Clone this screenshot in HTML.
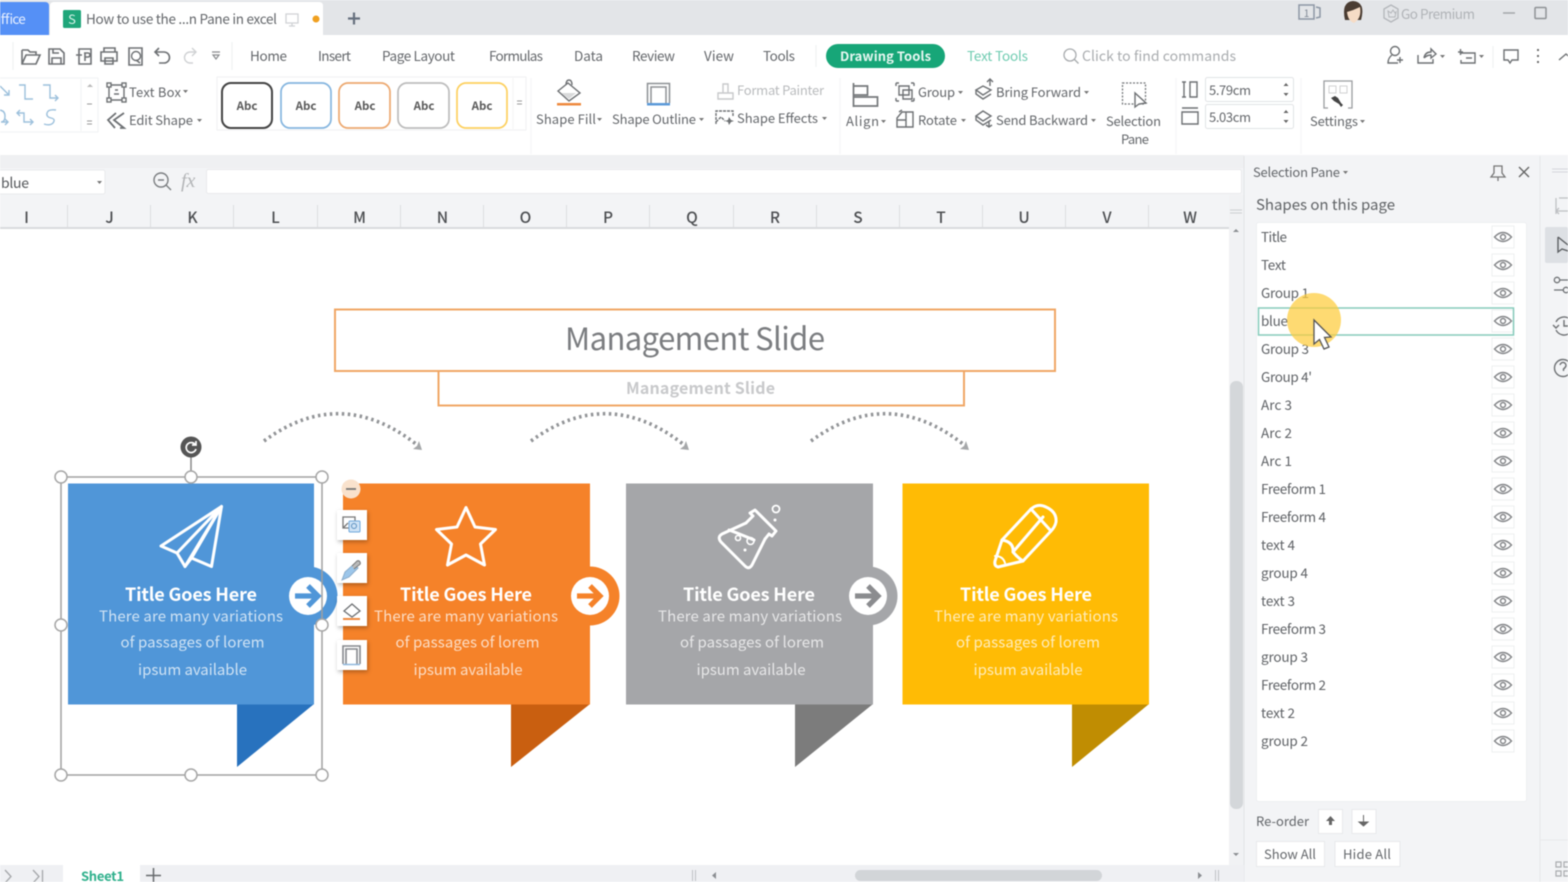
<!DOCTYPE html>
<html><head><meta charset="utf-8"><title>How to use the Selection Pane in excel</title>
<style>
html,body{margin:0;padding:0;width:1568px;height:882px;overflow:hidden;background:#fff}
svg{position:absolute;left:0;top:0;filter:blur(.55px)}
text{font-family:"Noto Sans CJK SC","Liberation Sans",sans-serif;font-size:13.5px;fill:#5f6266}
.tab{font-size:13.5px;fill:#64676b}
.rb{font-size:13px;fill:#64676b}
.col{font-size:15.5px;fill:#4d4f52;text-anchor:middle;font-weight:500}
.li{font-size:13.5px;fill:#5f6266}
.abc{font-size:11.5px;font-weight:700;fill:#5a5a5a;text-anchor:middle}
.tt{font-size:18px;font-weight:700;fill:#fff;text-anchor:middle}
.bd{font-size:15px;fill:#fff;fill-opacity:.72;text-anchor:middle}
.ic{fill:none;stroke:#6e7174;stroke-width:1.4}
.wh{fill:none;stroke:#fff;stroke-width:3;stroke-linejoin:round;stroke-linecap:round}
</style></head><body>
<svg width="1568" height="882" viewBox="0 0 1568 882" xmlns="http://www.w3.org/2000/svg">
<defs>
<path id="c" d="M0 0h5l-2.500 3z" fill="#777"/>
<g id="eye"><rect x="-11" y="-11" width="22" height="22" fill="#fff" stroke="#eeeff0"/><path d="M-8.500 0Q0-9 8.500 0Q0 9-8.500 0Z" fill="none" stroke="#85878a" stroke-width="1.400"/><circle r="2.500" fill="none" stroke="#85878a" stroke-width="1.400"/></g>
<g id="h"><circle r="6" fill="#fff" stroke="#a5a5a5" stroke-width="1.500"/></g>
<g id="fb"><rect x="0" y="0" width="30" height="30" fill="#fff" style="filter:drop-shadow(1px 2px 2px rgba(0,0,0,.28))"/></g>
</defs>

<!-- title bar -->
<rect width="1568" height="35" fill="#e3e5e8"/>
<path d="M0 2H45Q49 2 49 6V35H0Z" fill="#5590f6"/>
<text x="0" y="24" fill="#fff" style="fill:#e8f0ff;font-size:13.500px" textLength="25">ffice</text>
<path d="M50 35V6Q50 2 54 2H319Q323 2 323 6V35Z" fill="#fff"/>
<rect x="63" y="10" width="18" height="18" rx="1.500" fill="#1fa67a"/>
<text x="72" y="24" style="fill:#d8f3ea;font-size:13px;text-anchor:middle">S</text>
<text x="86" y="24" class="tab" textLength="191">How to use the ...n Pane in excel</text>
<path d="M286 14h12v9h-12zM292 23v3M289 26h6" fill="none" stroke="#d0d2d5" stroke-width="1.300"/>
<circle cx="316" cy="19" r="3.500" fill="#f0a020"/>
<path d="M348 18.500h12M354 12.500v12" stroke="#66707e" stroke-width="2.200"/>
<path d="M1299 5h15v14h-15zM1316 7l4 1v9l-4 1" fill="none" stroke="#8d97a5" stroke-width="1.500"/>
<text x="1306.500" y="17" style="font-size:10px;text-anchor:middle;fill:#7f8894">1</text>
<path d="M1345 20Q1341 2 1353 1Q1366 2 1361 20Z" fill="#4a3c32"/>
<path d="M1347 12Q1354 10 1360 7Q1362 18 1354 23Q1348 21 1347 12Z" fill="#f6dcc6"/>
<path d="M1384 9l7-4 7 4v9l-7 4-7-4z" fill="none" stroke="#b3b6ba" stroke-width="1.300"/>
<path d="M1388 11l3 2 2-3 2 3 1-1-1 5h-6z" fill="none" stroke="#b3b6ba"/>
<text x="1401" y="19" style="font-size:13.500px;fill:#b0b3b7" textLength="74">Go Premium</text>
<path d="M1503 13h12" stroke="#a3a6aa" stroke-width="1.500"/>
<rect x="1535" y="7.500" width="11" height="11" rx="1" fill="none" stroke="#8f9296" stroke-width="1.500"/>

<!-- ribbon -->
<rect y="35" width="1568" height="120" fill="#fff"/>
<rect y="155" width="1568" height="13" fill="#eff0f2"/>
<rect y="168" width="1568" height="27" fill="#f3f4f6"/>
<!-- quick access -->
<g class="ic" style="stroke-width:1.600">
<path d="M22 50v14h14l4-9H26l-4 9M22 50h6l2 2h6v3"/>
<path d="M49 49h11l4 4v11H49zM52 64v-6h9v6M53 49v4h6"/>
<path d="M79 49h12v15H79zM76 55h6M79 52v6M84 53h4a2 2 0 010 4h-3M85 53v8"/>
<path d="M104 52v-4h11v4M101 52h16v9h-16zM105 58h8v6h-8z"/>
<path d="M129 48h13v17h-13zM136 60l4 3"/><circle cx="136" cy="56" r="4.500" class="ic"/>
<path d="M155 52h9a5.500 5.500 0 010 11h-5M159 48l-4 4 4 4"/>
</g>
<path d="M196 52h-6a5.500 5.500 0 000 11h3M192 48l4 4-4 4" fill="none" stroke="#d0d2d4" stroke-width="1.400"/>
<path d="M212 52h8M213 55h6l-3 4z" fill="none" stroke="#8a8c8f" stroke-width="1.200"/>
<path d="M13 42v28M232 42v28" stroke="#eeeff0"/>
<text x="250" y="61" class="tab" textLength="37">Home</text>
<text x="318" y="61" class="tab" textLength="33">Insert</text>
<text x="382" y="61" class="tab" textLength="73">Page Layout</text>
<text x="489" y="61" class="tab" textLength="54">Formulas</text>
<text x="574" y="61" class="tab" textLength="29">Data</text>
<text x="632" y="61" class="tab" textLength="43">Review</text>
<text x="704" y="61" class="tab" textLength="30">View</text>
<text x="763" y="61" class="tab" textLength="32">Tools</text>
<path d="M816 45v22" stroke="#eeeff0"/>
<rect x="826" y="44" width="119" height="24" rx="12" fill="#17a678"/>
<text x="840" y="61" style="fill:#e6f7f1;font-weight:700;font-size:13px" textLength="91">Drawing Tools</text>
<text x="967" y="61" style="fill:#6ecbb0;font-size:13.500px" textLength="61">Text Tools</text>
<circle cx="1070" cy="55" r="6" fill="none" stroke="#a8abae" stroke-width="1.300"/><path d="M1074.500 59.500l4 4" stroke="#a8abae" stroke-width="1.300"/>
<text x="1082" y="61" style="fill:#a9acaf;font-size:14px" textLength="154">Click to find commands</text>
<g class="ic">
<circle cx="1395" cy="51" r="4.500"/><path d="M1392 55q-4 3-4 8h10M1400 57v6M1397 60h6"/>
<path d="M1418 55v8h15v-4M1424 58q1-6 7-6v-3l5 5-5 4v-3q-4 0-7 3"/>
<path d="M1461 53h14v10h-14v-3M1458 52h5M1460.500 49v6M1466 58h6"/>
<path d="M1504 50h14v10h-6l-2 3-2-3h-4z"/>
<path d="M1559 60l7-6 7 6"/>
</g>
<use href="#c" x="1440" y="55"/><use href="#c" x="1479" y="55"/>
<circle cx="1538" cy="50" r="1.100" fill="#666"/><circle cx="1538" cy="56" r="1.100" fill="#666"/><circle cx="1538" cy="62" r="1.100" fill="#666"/>
<path d="M1493 46v22" stroke="#eeeff0"/>

<!-- connector gallery -->
<rect x="-2" y="78" width="100" height="54" fill="#fff" stroke="#f1f2f3"/>
<path d="M81 79v52" stroke="#f1f2f3"/>
<g fill="none" stroke="#9cc0dc" stroke-width="1.400">
<path d="M0 86l9 9M9 90v5H4"/>
<path d="M19 85h6v14h8"/>
<path d="M43 85h7v13h8M55 95l3 3-3 3"/>
<path d="M-2 110q7 0 7 6t-4 6H8M5 119l3 3-3 3"/>
<path d="M20 110l-3 3 3 3M17 113h7v9h9M30 119l3 3-3 3"/>
<path d="M56 110q-8-1-9 3t4 5 2 5q-3 3-9 1"/>
</g>
<path d="M87 87l3-3 3 3z" fill="#bbb"/><path d="M87 104h5" stroke="#999"/><path d="M87 121h5M87 124h5" stroke="#999"/>
<g class="ic">
<path d="M109 85h15v15h-15z"/><rect x="107" y="83" width="4" height="4" fill="#fff"/><rect x="122" y="83" width="4" height="4" fill="#fff"/><rect x="107" y="98" width="4" height="4" fill="#fff"/><rect x="122" y="98" width="4" height="4" fill="#fff"/>
<path d="M115 90h3M114 94h5"/>
<path d="M116 113l-8 7 7 8M124 113l-10 7 10 8h-4" stroke-width="1.800"/>
</g>
<text x="129" y="97" class="rb" textLength="52">Text Box</text><use href="#c" x="183" y="90"/>
<text x="129" y="125" class="rb" textLength="64">Edit Shape</text><use href="#c" x="197" y="119"/>

<!-- style gallery -->
<rect x="217" y="77" width="309" height="53" fill="#fff" stroke="#f0f1f2"/>
<path d="M513 78v51" stroke="#f3f3f4"/>
<rect x="222" y="83" width="50" height="45" rx="9" fill="#fff" stroke="#444" stroke-width="2"/>
<rect x="281" y="83" width="50" height="45" rx="9" fill="#fff" stroke="#84b5df" stroke-width="1.700"/>
<rect x="339" y="83" width="51" height="45" rx="9" fill="#fff" stroke="#eca86f" stroke-width="1.700"/>
<rect x="398" y="83" width="51" height="45" rx="9" fill="#fff" stroke="#bcbcbc" stroke-width="1.700"/>
<rect x="457" y="83" width="50" height="45" rx="9" fill="#fff" stroke="#fdd05e" stroke-width="1.700"/>
<text x="247" y="110" class="abc">Abc</text><text x="306" y="110" class="abc">Abc</text><text x="365" y="110" class="abc">Abc</text><text x="424" y="110" class="abc">Abc</text><text x="482" y="110" class="abc">Abc</text>
<path d="M517 101h5M517 104h5" stroke="#999"/>
<path d="M531 78v76M840 78v76M1176 78v76M1301 78v76" stroke="#f4f5f6"/>

<!-- fill/outline -->
<path d="M558 91l10-8 12 10-11 8zM566 85q0-5 3-5 3 0 3 5" fill="none" stroke="#6e7174" stroke-width="1.400"/>
<path d="M561 93h15l-7 6z" fill="#d9dadb"/>
<rect x="557" y="103" width="24" height="2.500" fill="#ee8a3f"/>
<text x="536" y="124" class="rb" textLength="60">Shape Fill</text><use href="#c" x="597" y="118"/>
<path d="M647.500 103V83.500H669.500V103M651 103V87H666V103" fill="none" stroke="#8d9094" stroke-width="1.500"/>
<rect x="647" y="103" width="23" height="2.500" fill="#5b9ad9"/>
<text x="612" y="124" class="rb" textLength="84">Shape Outline</text><use href="#c" x="699" y="118"/>
<path d="M718 99v-6h5v-9h5v9h5v6zM718 93h15" fill="none" stroke="#c8c9cb" stroke-width="1.400"/>
<text x="737" y="95" class="rb" style="fill:#b9bbbd" textLength="87">Format Painter</text>
<path d="M716 124v-13h17v6M716 122l5-5 4 4" fill="none" stroke="#6e7174" stroke-width="1.400" stroke-dasharray="3 1"/><path d="M729 117l2 3 3 1-3 1-2 3-1-3-3-1 3-1z" fill="#6e7174"/>
<text x="737" y="123" class="rb" textLength="81">Shape Effects</text><use href="#c" x="822" y="117"/>

<!-- arrange -->
<path d="M853.500 83v24M853.500 86h14v9h-14M853.500 97h24v9h-24" fill="none" stroke="#74777a" stroke-width="1.700"/>
<text x="846" y="126" class="rb" textLength="33">Align</text><use href="#c" x="881" y="120"/>
<g class="ic">
<path d="M899 86h10v9h-10zM903 90h9v9h-9z"/><path d="M896 83h3M896 83v3M914 83h-3M914 83v3M896 101v-3M896 101h3M914 101v-3M914 101h-3"/>
<path d="M897 127v-9l5-6h11v15zM897 120h9M906 112v15M899 112l3-2"/>
<path d="M976 90l7-4 8 4-8 5zM976 90v4l7 5 8-5M990 79v7M987 82l3-3 3 3"/>
<path d="M976 116l7-5 8 5-8 5zM976 116v4l7 5 8-5M989 122v5M986 125l3 2 3-2"/>
</g>
<text x="918" y="97" class="rb" textLength="37">Group</text><use href="#c" x="958" y="91"/>
<text x="918" y="125" class="rb" textLength="39">Rotate</text><use href="#c" x="961" y="119"/>
<text x="996" y="97" class="rb" textLength="85">Bring Forward</text><use href="#c" x="1084" y="91"/>
<text x="996" y="125" class="rb" textLength="92">Send Backward</text><use href="#c" x="1091" y="119"/>
<rect x="1122.500" y="83" width="23" height="21" fill="none" stroke="#74777a" stroke-width="1.300" stroke-dasharray="2 1.500"/>
<path d="M1135 93v14l4-3 7-1z" fill="#fff" stroke="#6e7174" stroke-width="1.400"/>
<text x="1106" y="126" class="rb" textLength="55">Selection</text>
<text x="1121" y="144" class="rb" textLength="28">Pane</text>

<!-- size -->
<g class="ic"><path d="M1182 82h4M1182 97h4M1184 82v15M1190 82h7v15h-7z"/><path d="M1182 108h16M1182 112h16v12h-16z"/></g>
<rect x="1205.500" y="77.500" width="88" height="24" rx="2" fill="#fff" stroke="#e1e3e5"/>
<rect x="1205.500" y="104.500" width="88" height="24" rx="2" fill="#fff" stroke="#e1e3e5"/>
<text x="1209" y="95" class="rb" textLength="42">5.79cm</text>
<text x="1209" y="122" class="rb" textLength="42">5.03cm</text>
<path d="M1283.500 86l2.500-3 2.500 3zM1283.500 93h5l-2.500 3zM1283.500 113l2.500-3 2.500 3zM1283.500 120h5l-2.500 3z" fill="#666"/>
<!-- settings -->
<path d="M1328 108h-4V81h28v27h-4" fill="none" stroke="#9a9c9f" stroke-width="1.300"/>
<path d="M1329 86h7v7h-7zM1340 86h7v7h-7z" fill="none" stroke="#d0d1d3"/>
<path d="M1331 98l3 3 5 3 2 3 2-2-2-2-3-5-3-2z" fill="#444"/>
<text x="1310" y="126" class="rb" textLength="48">Settings</text><use href="#c" x="1360" y="120"/>

<!-- formula bar -->
<rect x="-2" y="170" width="107" height="24" rx="2" fill="#fff" stroke="#e9eaec"/>
<text x="1" y="188" style="font-size:14px;fill:#55585b" textLength="28">blue</text>
<use href="#c" x="97" y="181"/>
<circle cx="161" cy="180" r="7" fill="none" stroke="#7b7e81" stroke-width="1.400"/><path d="M158 180h6M166 185l5 5" stroke="#7b7e81" stroke-width="1.400"/>
<text x="181" y="187" style="font-family:'Liberation Serif',serif;font-style:italic;font-size:20px;fill:#b3b5b7">fx</text>
<rect x="206.500" y="169.500" width="1035" height="24" rx="2" fill="#fff" stroke="#e9eaec"/>

<!-- column headers -->
<rect y="195" width="1229" height="34" fill="#f3f4f6"/>
<rect y="227" width="1229" height="2" fill="#d9dbde"/>
<path d="M67.500 205V227M150.500 205V227M233.500 205V227M317.500 205V227M400.500 205V227M483.500 205V227M566.500 205V227M649.500 205V227M733.500 205V227M816.500 205V227M899.500 205V227M982.500 205V227M1065.500 205V227M1148.500 205V227" stroke="#dcdee0"/>
<text x="26.500" y="223" class="col">I</text><text x="109.500" y="223" class="col">J</text><text x="192.500" y="223" class="col">K</text><text x="275.500" y="223" class="col">L</text><text x="359.500" y="223" class="col">M</text><text x="442.500" y="223" class="col">N</text><text x="525.500" y="223" class="col">O</text><text x="608" y="223" class="col">P</text><text x="692" y="223" class="col">Q</text><text x="775" y="223" class="col">R</text><text x="858" y="223" class="col">S</text><text x="941" y="223" class="col">T</text><text x="1024" y="223" class="col">U</text><text x="1107" y="223" class="col">V</text><text x="1190" y="223" class="col">W</text>

<!-- vertical scrollbar -->
<rect x="1229" y="195" width="15" height="670" fill="#f1f2f4"/>
<path d="M1230 210h12M1230 213h12" stroke="#ccced1"/>
<path d="M1233 232l3-3 3 3z" fill="#8b8e92"/>
<rect x="1230" y="381" width="13" height="428" rx="6" fill="#d4d7da"/>
<path d="M1233 853h6l-3 3z" fill="#8b8e92"/>

<!-- slide heading -->
<rect x="335" y="309.500" width="720" height="61.500" fill="#fff" stroke="#f0a766" stroke-width="2"/>
<path d="M438.500 372V405.500H964V372" fill="none" stroke="#f0a766" stroke-width="2"/>
<text x="695" y="350" style="font-size:31px;fill:#7b7d80;text-anchor:middle" textLength="260">Management Slide</text>
<text x="700.500" y="394" style="font-size:16px;font-weight:700;fill:#c8c9cb;text-anchor:middle" textLength="149">Management Slide</text>

<!-- arcs -->
<g fill="none" stroke="#929497" stroke-width="3.600" stroke-dasharray="2.500 3.500">
<path d="M264 441Q340 385 416 444"/>
<path d="M531 441Q607 385 683 444"/>
<path d="M811 441Q887 385 963 444"/>
</g>
<path d="M413 449l9 1-3-9-2 5zM680 449l9 1-3-9-2 5zM960 449l9 1-3-9-2 5z" fill="#a5a7a9"/>

<!-- cards -->
<path d="M237 704H314L237 767Z" fill="#2872be"/>
<path d="M511 704H590L511 767Z" fill="#c95f10"/>
<path d="M795 704H873L795 767Z" fill="#7c7c7c"/>
<path d="M1072 704H1149L1072 767Z" fill="#c08d02"/>
<circle cx="308" cy="596" r="29.500" fill="#5096d8"/>
<circle cx="590" cy="596" r="29.500" fill="#f58229"/>
<circle cx="868" cy="596" r="29.500" fill="#a5a6a9"/>
<rect x="68" y="483.500" width="246" height="221" fill="#5096d8"/>
<rect x="343" y="483.500" width="247" height="221" fill="#f58229"/>
<rect x="626" y="483.500" width="247" height="221" fill="#a5a6a9"/>
<rect x="902.500" y="483.500" width="246.500" height="221" fill="#ffbb05"/>
<path d="M322 567V625" stroke="#4a7fb5"/>
<circle cx="308" cy="596" r="19" fill="#fff"/><circle cx="590" cy="596" r="19" fill="#fff"/><circle cx="868" cy="596" r="19" fill="#fff"/>
<g fill="none" stroke-width="5.200">
<path d="M295 596H317M308 586L318 596L308 606" stroke="#5096d8"/>
<path d="M577 596H599M590 586L600 596L590 606" stroke="#f58229"/>
<path d="M855 596H877M868 586L878 596L868 606" stroke="#8b8c8f"/>
</g>

<!-- plane -->
<g class="wh" stroke-width="2.500">
<path d="M221.500 506.500L161 546L177 553L185 566.500L191.500 558L211.500 566.500Z"/>
<path d="M221.500 506.500L177 553M221.500 506.500L185 566.500M221.500 506.500L191.500 558"/>
</g>
<!-- star -->
<path class="wh" d="M466 507.500L475 527L495.500 529.500L480.500 544L484.500 565L466 555L447.500 565L451.500 544L436.500 529.500L457 527Z"/>
<!-- flask -->
<g class="wh" stroke-width="2.500">
<path d="M746 523L722 534Q717 537 721 542L745 566Q749 570 752 565L765 539"/>
<path d="M746 523L753 516L750 513L755 510L776 531L772 536L769 534L765 539"/>
<path d="M729 530Q740 534 754 540"/>
<circle cx="776" cy="509" r="3.500" stroke-width="1.800"/><circle cx="738" cy="538" r="2.500" stroke-width="1.600"/><circle cx="750.500" cy="541" r="3.500" stroke-width="1.600"/>
</g>
<circle cx="775" cy="520" r="1.500" fill="#fff"/><circle cx="745" cy="550" r="1.500" fill="#fff"/>
<!-- pencil -->
<g class="wh" stroke-width="2.800">
<path d="M1002 540L1031 509Q1038 503 1046 507Q1057 512 1056 522Q1055 527 1051 531L1023 561L998 567Q994 566 995 561Z"/>
<path d="M1002 540Q1014 542 1013 552Q1018 558 1023 561M1013 552L1043 517M1031 509L1051 531"/>
<path d="M995 556Q1003 556 1005 563" stroke-width="2"/>
</g>

<text x="191" y="601" class="tt" textLength="132">Title Goes Here</text>
<text x="191" y="621.500" class="bd" textLength="184">There are many variations</text>
<text x="192.500" y="647.500" class="bd" textLength="144">of passages of lorem</text>
<text x="192.500" y="675" class="bd" textLength="109">ipsum available</text>
<text x="466" y="601" class="tt" textLength="132">Title Goes Here</text>
<text x="466" y="621.500" class="bd" textLength="184">There are many variations</text>
<text x="467.500" y="647.500" class="bd" textLength="144">of passages of lorem</text>
<text x="468" y="675" class="bd" textLength="109">ipsum available</text>
<text x="749" y="601" class="tt" textLength="132">Title Goes Here</text>
<text x="750" y="621.500" class="bd" textLength="184">There are many variations</text>
<text x="752" y="647.500" class="bd" textLength="144">of passages of lorem</text>
<text x="751" y="675" class="bd" textLength="109">ipsum available</text>
<text x="1026" y="601" class="tt" textLength="132">Title Goes Here</text>
<text x="1026" y="621.500" class="bd" textLength="184">There are many variations</text>
<text x="1028" y="647.500" class="bd" textLength="144">of passages of lorem</text>
<text x="1028" y="675" class="bd" textLength="109">ipsum available</text>

<!-- selection frame -->
<rect x="61" y="477" width="261" height="298" fill="none" stroke="#a0a0a0" stroke-width="1.500"/>
<path d="M191 447V477" stroke="#888" stroke-width="1.500"/>
<circle cx="191" cy="447" r="10.500" fill="#555"/>
<path d="M195.500 445a5 5 0 10.500 4M196 441v4h-4" fill="none" stroke="#fff" stroke-width="1.700"/>
<use href="#h" x="61" y="477"/><use href="#h" x="191" y="477"/><use href="#h" x="322" y="477"/>
<use href="#h" x="61" y="625"/><use href="#h" x="322" y="625"/>
<use href="#h" x="61" y="775"/><use href="#h" x="191" y="775"/><use href="#h" x="322" y="775"/>

<!-- floating toolbar -->
<circle cx="351" cy="489" r="9.500" fill="#f9e2cd"/><path d="M346 489h10" stroke="#777" stroke-width="1.800"/>
<use href="#fb" x="337" y="510"/><use href="#fb" x="337" y="553"/><use href="#fb" x="337" y="596"/><use href="#fb" x="337" y="640"/>
<path d="M343 517h12v11h-12zM343 528l5-5" fill="none" stroke="#777" stroke-width="1.300"/><rect x="349" y="521" width="11" height="11" rx="1" fill="#cfe3f5" stroke="#6fa8dc"/><circle cx="354" cy="526" r="2.500" fill="none" stroke="#5a8fc0"/>
<path d="M342 580l3-8 9-8 4 4-9 9z" fill="#9cc6ea" stroke="#8aaccb"/><path d="M352 566l5-5q2-1 3 1t-1 3l-5 4" fill="#bbb" stroke="#777"/>
<path d="M344 611l8-7 8 7-8 6z" fill="#fff" stroke="#6e7174" stroke-width="1.300"/><path d="M343 619h17" stroke="#ee8a3f" stroke-width="2"/>
<path d="M343 664V646h17v18M346 664V649h11v15" fill="none" stroke="#85888c" stroke-width="1.600"/><path d="M343 664.500h17" stroke="#8fb8dd" stroke-width="1.600"/>

<!-- pane -->
<rect x="1244" y="155" width="324" height="727" fill="#f3f4f6"/>
<path d="M1244 156V882" stroke="#e2e4e6"/>
<path d="M1540 156V882" stroke="#e6e8ea"/>
<text x="1253" y="177" class="rb" textLength="87">Selection Pane</text><use href="#c" x="1343" y="171"/>
<path d="M1491 177h14l-3-4V166h-8v7zM1498 177v4" fill="none" stroke="#777" stroke-width="1.300"/>
<path d="M1519 167l10 10M1529 167l-10 10" stroke="#666" stroke-width="1.400"/>
<text x="1256" y="210" style="font-size:15px;fill:#606366" textLength="139">Shapes on this page</text>
<rect x="1256.500" y="222.500" width="270" height="579" rx="2" fill="#fff" stroke="#eeeff1"/>
<text x="1261" y="242" class="li" textLength="26">Title</text>
<text x="1261" y="270" class="li" textLength="25">Text</text>
<text x="1261" y="298" class="li" textLength="48">Group 1</text>
<text x="1261" y="326" class="li" textLength="27">blue</text>
<text x="1261" y="354" class="li" textLength="48">Group 3</text>
<text x="1261" y="382" class="li" textLength="51">Group 4'</text>
<text x="1261" y="410" class="li" textLength="31">Arc 3</text>
<text x="1261" y="438" class="li" textLength="31">Arc 2</text>
<text x="1261" y="466" class="li" textLength="31">Arc 1</text>
<text x="1261" y="494" class="li" textLength="65">Freeform 1</text>
<text x="1261" y="522" class="li" textLength="65">Freeform 4</text>
<text x="1261" y="550" class="li" textLength="34">text 4</text>
<text x="1261" y="578" class="li" textLength="47">group 4</text>
<text x="1261" y="606" class="li" textLength="34">text 3</text>
<text x="1261" y="634" class="li" textLength="65">Freeform 3</text>
<text x="1261" y="662" class="li" textLength="47">group 3</text>
<text x="1261" y="690" class="li" textLength="65">Freeform 2</text>
<text x="1261" y="718" class="li" textLength="34">text 2</text>
<text x="1261" y="746" class="li" textLength="47">group 2</text>
<use href="#eye" x="1503" y="237"/><use href="#eye" x="1503" y="265"/><use href="#eye" x="1503" y="293"/><use href="#eye" x="1503" y="321"/><use href="#eye" x="1503" y="349"/><use href="#eye" x="1503" y="377"/><use href="#eye" x="1503" y="405"/><use href="#eye" x="1503" y="433"/><use href="#eye" x="1503" y="461"/><use href="#eye" x="1503" y="489"/><use href="#eye" x="1503" y="517"/><use href="#eye" x="1503" y="545"/><use href="#eye" x="1503" y="573"/><use href="#eye" x="1503" y="601"/><use href="#eye" x="1503" y="629"/><use href="#eye" x="1503" y="657"/><use href="#eye" x="1503" y="685"/><use href="#eye" x="1503" y="713"/><use href="#eye" x="1503" y="741"/>
<rect x="1258.500" y="308" width="255" height="27" fill="none" stroke="#86cbbb" stroke-width="1.500"/>
<circle cx="1314" cy="320" r="27" fill="#fdcc3c" fill-opacity=".72"/>
<path d="M1314 320V344L1319.500 339.500L1324 349L1329 347L1324.500 337.500L1331 337Z" fill="#fff" stroke="#555" stroke-width="1.300"/>

<text x="1256" y="826" class="rb" textLength="53">Re-order</text>
<rect x="1318.500" y="809.500" width="24" height="24" fill="#fff" stroke="#e8e9eb"/>
<rect x="1352" y="809.500" width="24" height="24" fill="#fff" stroke="#e8e9eb"/>
<path d="M1326 821l4.500-5 4.500 5h-3v4h-3v-4z" fill="#666"/>
<path d="M1363.500 815v8M1359 822l4.500 4 4.500-4z" fill="#666" stroke="#666"/>
<rect x="1256.500" y="841.500" width="68" height="25" fill="#fff" stroke="#e8e9eb"/>
<rect x="1335" y="841.500" width="65" height="25" fill="#fff" stroke="#e8e9eb"/>
<text x="1264" y="859" class="rb" textLength="52">Show All</text>
<text x="1343" y="859" class="rb" textLength="48">Hide All</text>

<!-- right sidebar -->
<path d="M1552 169h16M1552 172h16" stroke="#d5d7da"/>
<path d="M1556 198v16M1559 198h9M1559 208l-3 3 3 3M1556 211h12" fill="none" stroke="#bfc1c4" stroke-width="1.300"/>
<rect x="1545" y="227" width="23" height="36" rx="2" fill="#dde0e4"/>
<path d="M1558 237V252L1562 249L1568 251M1558 237L1568 245" fill="none" stroke="#5c5f62" stroke-width="1.400"/>
<circle cx="1557" cy="280" r="2.700" fill="none" stroke="#6e7174" stroke-width="1.300"/><circle cx="1566" cy="290" r="2.700" fill="none" stroke="#6e7174" stroke-width="1.300"/>
<path d="M1560 280h8M1554 290h9" stroke="#6e7174" stroke-width="1.300"/>
<path d="M1556 322a9 9 0 1 1 0 8M1553 325l3 3 3-3M1564 320v6h4" fill="none" stroke="#6e7174" stroke-width="1.400"/>
<circle cx="1563" cy="368" r="8.500" fill="none" stroke="#6e7174" stroke-width="1.400"/><path d="M1560 365a3 3 0 116 1q-1 2-2.500 3v2" fill="none" stroke="#6e7174" stroke-width="1.400"/>
<path d="M1540 840h28" stroke="#e8e9eb"/>
<path d="M1556 862h5v5h-5zM1564 862h5v5h-5zM1556 871h5v5h-5zM1564 871h5v5h-5z" fill="none" stroke="#a9abae" stroke-width="1.200"/>

<!-- sheet tabs -->
<rect y="865" width="1244" height="17" fill="#eff0f3"/>
<rect x="63" y="863" width="77" height="19" fill="#fff"/>
<text x="81" y="881" style="font-size:13px;font-weight:700;fill:#2fb08c" textLength="43">Sheet1</text>
<path d="M5 870l6 6.500-6 6.500M33 870l6 6.500-6 6.500M42.500 870v12" fill="none" stroke="#a5a7aa" stroke-width="1.300"/>
<path d="M146 875.500h15M153.500 868v14" stroke="#66696c" stroke-width="1.500"/>
<path d="M692.500 870v11M695.500 870v11M1215.500 870v11M1218.500 870v11" stroke="#bfc2c5"/>
<path d="M716 872v7l-4-3.500zM1198 872v7l4-3.500z" fill="#8b8e92"/>
<rect x="855" y="870" width="247" height="11" rx="5.500" fill="#d2d5d8"/>
</svg>
</body></html>
